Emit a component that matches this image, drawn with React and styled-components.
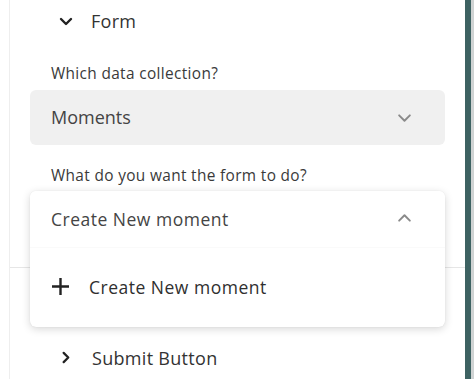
import styled, { createGlobalStyle } from 'styled-components';

const GlobalStyle = createGlobalStyle`
  html, body {
    margin: 0;
    padding: 0;
    background: #ffffff;
    overflow: hidden;
  }
  * { box-sizing: border-box; }
`;

const Page = styled.div`
  display: flex;
  width: 474px;
  height: 379px;
  font-family: "Open Sans", "Noto Sans", sans-serif;
  color: #333;
`;

const Gutter = styled.div`
  width: 10px;
  border-right: 1px solid #eeeeee;
  flex-shrink: 0;
`;

const Panel = styled.div`
  flex: 1;
  display: flex;
  flex-direction: column;
  background: #fff;
`;

const Rail = styled.div`
  width: 6px;
  background: #3d6262;
  flex-shrink: 0;
`;

const Edge = styled.div`
  width: 3px;
  background: #cfd3d3;
  flex-shrink: 0;
`;

const SectionHeader = styled.div`
  display: flex;
  align-items: center;
  gap: ${(p) => p.$gap || 18}px;
  height: 44px;
  padding-left: ${(p) => p.$indent || 49}px;
  font-size: 18px;
  letter-spacing: 0.3px;
  color: #333;
`;

const Body = styled.div`
  display: flex;
  flex-direction: column;
  padding: 0 20px;
`;

const Label = styled.div`
  font-size: 15.4px;
  color: #3a3a3a;
  padding-left: 21px;
  line-height: 20px;
  margin-top: ${(p) => p.$top}px;
  margin-bottom: ${(p) => p.$bottom}px;
  letter-spacing: 0.35px;
`;

const Select = styled.div`
  display: flex;
  align-items: center;
  justify-content: space-between;
  height: 55px;
  padding: 0 33px 0 21px;
  border-radius: 6px;
  background: ${(p) => (p.$open ? '#fff' : '#f0f0f0')};
  font-size: 18px;
  color: #444;
`;

const Field = styled.div`
  position: relative;
`;

const Popup = styled.div`
  position: absolute;
  left: 0;
  right: 0;
  top: 0;
  height: 136px;
  border-radius: 6px;
  background: #fff;
  box-shadow: 0 2px 8px rgba(0, 0, 0, 0.16), 0 0 1px rgba(0, 0, 0, 0.12);
  display: flex;
  flex-direction: column;
  overflow: hidden;
  z-index: 2;
`;

const PopupHead = styled.div`
  display: flex;
  align-items: center;
  justify-content: space-between;
  height: 56px;
  padding: 0 33px 0 21px;
  background: #fff;
  box-shadow: 0 1px 1px rgba(0, 0, 0, 0.02);
  font-size: 17.5px;
  letter-spacing: 0.5px;
  color: #444;
`;

const Option = styled.div`
  display: flex;
  align-items: center;
  gap: 19px;
  flex: 1;
  padding: 0 21px;
  font-size: 17.5px;
  letter-spacing: 0.5px;
  font-weight: 500;
  color: #2f2f2f;
`;

const Divider = styled.div`
  height: 1px;
  background: #e6e6e6;
  margin-top: 21px;
`;

const Spacer = styled.div`
  height: 70px;
`;

const Chevron = ({ dir = 'down', color = '#222', size = 14, width = 2.4 }) => {
  const paths = {
    down: 'M2 5l5 5 5-5',
    up: 'M2 9l5-5 5 5',
    right: 'M5 2l5 5-5 5',
  };
  return (
    <svg width={size} height={size} viewBox="0 0 14 14" fill="none">
      <path d={paths[dir]} stroke={color} strokeWidth={width} strokeLinecap="round" strokeLinejoin="round" />
    </svg>
  );
};

const Plus = () => (
  <svg width="19" height="19" viewBox="0 0 19 19">
    <path d="M9.5 1v17M1 9.5h17" stroke="#222" strokeWidth="2.4" />
  </svg>
);

export default function App() {
  return (
    <Page>
      <GlobalStyle />
      <Gutter />
      <Panel>
        <SectionHeader>
          <Chevron dir="down" />
          Form
        </SectionHeader>
        <Body>
          <Label $top={21} $bottom={6}>Which data collection?</Label>
          <Select>
            Moments
            <Chevron dir="down" color="#8a8a8a" size={15} width={1.8} />
          </Select>
          <Label $top={21} $bottom={5}>What do you want the form to do?</Label>
          <Field>
            {/* trigger stays in flow; the open list covers it */}
            <Select $open />
            <Popup>
              <PopupHead>
                Create New moment
                <Chevron dir="up" color="#8a8a8a" size={15} width={1.8} />
              </PopupHead>
              <Option>
                <Plus />
                Create New moment
              </Option>
            </Popup>
          </Field>
        </Body>
        <Divider />
        <Spacer />
        <SectionHeader $indent={49} $gap={20}>
          <Chevron dir="right" size={13} />
          Submit Button
        </SectionHeader>
      </Panel>
      <Rail />
      <Edge />
    </Page>
  );
}
